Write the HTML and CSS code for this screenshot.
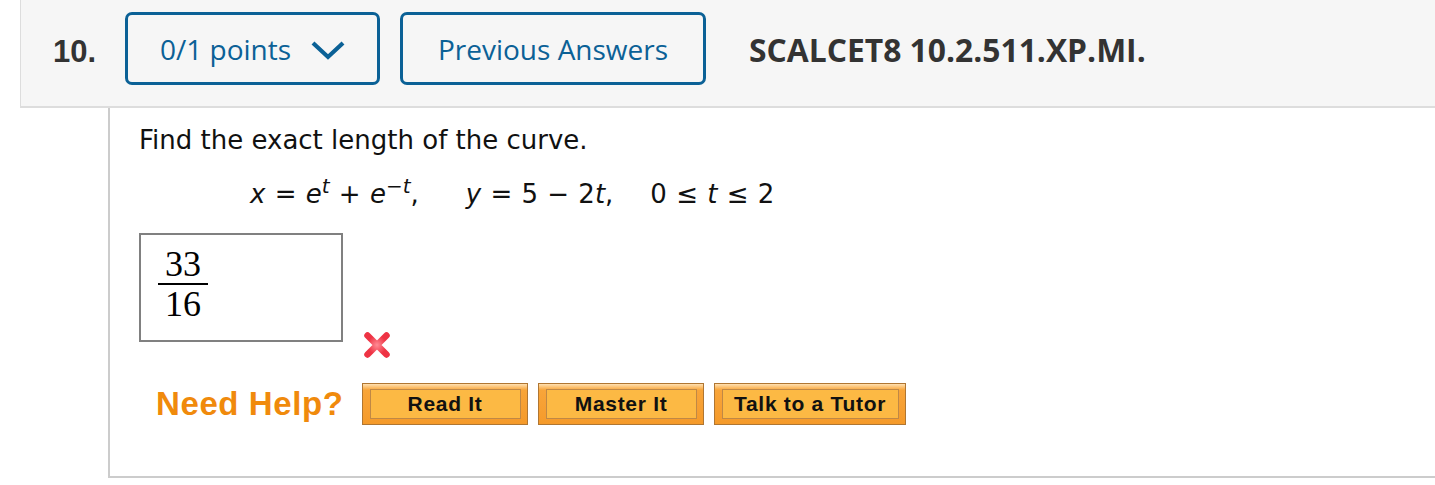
FILE: index.html
```html
<!DOCTYPE html>
<html>
<head>
<meta charset="utf-8">
<link rel="stylesheet" href="styles.css">
</head>
<body>
<div class="qhead">
  <span class="qnum">10.</span>
  <button class="pill points">0/1 points
    <svg class="chev" width="34" height="20" viewBox="0 0 34 20"><path d="M2 3 L17 17 L32 3" fill="none" stroke="#0b6196" stroke-width="4.2"/></svg>
  </button>
  <button class="pill prev">Previous Answers</button>
  <span class="qid">SCALCET8 10.2.511.XP.MI.</span>
</div>
<div class="qbody">
  <p class="prompt">Find the exact length of the curve.</p>
  <p class="math"><i>x</i> = <i>e</i><sup><i>t</i></sup> + <i>e</i><sup>−<i>t</i></sup>,<span class="gap1"></span><i>y</i> = 5 − 2<i>t</i>,<span class="gap2"></span>0 ≤ <i>t</i> ≤ 2</p>
  <div class="answer-row">
    <div class="answer">
      <div class="frac"><span class="num">33</span><span class="den">16</span></div>
    </div>
    <svg class="wrong" width="28" height="28" viewBox="0 0 28 28">
      <defs><radialGradient id="rg" cx="50%" cy="50%" r="50%"><stop offset="0" stop-color="#ff8c95"/><stop offset="1" stop-color="#ee3344"/></radialGradient></defs>
      <path d="M4.5 4.5 L23.5 23.5 M23.5 4.5 L4.5 23.5" stroke="url(#rg)" stroke-width="6.5" stroke-linecap="round"/>
    </svg>
  </div>
  <div class="help">
    <span class="need">Need Help?</span>
    <button class="hbtn w165"><span>Read It</span></button>
    <button class="hbtn w165"><span>Master It</span></button>
    <button class="hbtn w191"><span>Talk to a Tutor</span></button>
  </div>
</div>
</body>
</html>
```
FILE: styles.css
```css
html, body { margin: 0; padding: 0; background: #fff; }
body { width: 1435px; height: 485px; overflow: hidden; }

.qhead {
  margin-left: 20px;
  height: 108px;
  box-sizing: border-box;
  background: #f6f6f6;
  border-left: 1px solid #dddddd;
  border-bottom: 2px solid #dddddd;
  display: flex;
  align-items: flex-start;
  padding: 12px 0 0 32px;
}
.qnum {
  font-family: "Liberation Sans", Arial, sans-serif;
  font-weight: bold;
  font-size: 31px;
  color: #333;
  margin-top: 22px;
  width: 72px;
}
.pill {
  height: 73px;
  box-sizing: border-box;
  border: 3px solid #0b6196;
  border-radius: 7px;
  background: #f6f6f6;
  color: #0b6196;
  font-family: "Open Sans", sans-serif;
  font-size: 28px;
  display: flex;
  align-items: center;
  padding: 0;
  margin: 0;
}
.points { width: 255px; padding-left: 32px; }
.chev { margin-left: 20px; margin-top: 2px; }
.prev { width: 306px; margin-left: 20px; justify-content: center; }
.qid {
  font-family: "Open Sans", sans-serif;
  font-weight: bold;
  font-size: 31.8px;
  color: #333;
  margin-left: 43px;
  margin-top: 16px;
}

.qbody {
  margin-left: 108px;
  height: 370px;
  box-sizing: border-box;
  border-left: 2px solid #cccccc;
  border-bottom: 2px solid #cccccc;
  padding: 17px 0 0 29px;
  font-family: "DejaVu Sans", Verdana, sans-serif;
  color: #111;
}
.prompt { margin: 0; font-size: 26px; line-height: 30px; }
.math { margin: 24px 0 0 111px; font-size: 26px; line-height: 30px; word-spacing: 1px; }
.math i { font-style: italic; }
.math sup { font-size: 20px; vertical-align: 10px; line-height: 0; }
.gap1 { display: inline-block; width: 47px; }
.gap2 { display: inline-block; width: 37px; }

.answer-row { display: flex; align-items: flex-start; margin-top: 24px; }
.answer {
  width: 204px; height: 109px; box-sizing: border-box;
  border: 2px solid #808080;
  padding: 12px 0 0 17px;
}
.frac {
  display: inline-flex; flex-direction: column; align-items: center;
  font-family: "Liberation Serif", "Times New Roman", serif;
  font-size: 36px; line-height: 34px; color: #000;
}
.num { padding: 0 7px 2px; border-bottom: 2px solid #000; }
.den { padding-top: 2px; }
.wrong { margin: 98px 0 0 20px; }

.help { display: flex; align-items: center; margin-top: 24px; padding-left: 17px; }
.need {
  font-family: "Liberation Sans", Arial, sans-serif;
  font-weight: bold; font-size: 33px; color: #f08a0c;
  letter-spacing: 0.6px;
  margin-right: 18px;
}
.hbtn {
  height: 42px; box-sizing: border-box; padding: 5px 6px 5px 7px; margin: 0 10px 0 0;
  border: 1px solid #b07632;
  background: linear-gradient(#ffe0b0 0, #f8a53a 6px, #f59a2a 100%);
  display: flex;
}
.hbtn span {
  flex: 1;
  border: 1px solid #c08845;
  background: #fcb944;
  font-family: "Liberation Sans", Arial, sans-serif;
  font-weight: bold; font-size: 21px; letter-spacing: 0.7px; color: #111;
  display: flex; align-items: center; justify-content: center;
}
.w165 { width: 166px; }
.w191 { width: 192px; }
```
